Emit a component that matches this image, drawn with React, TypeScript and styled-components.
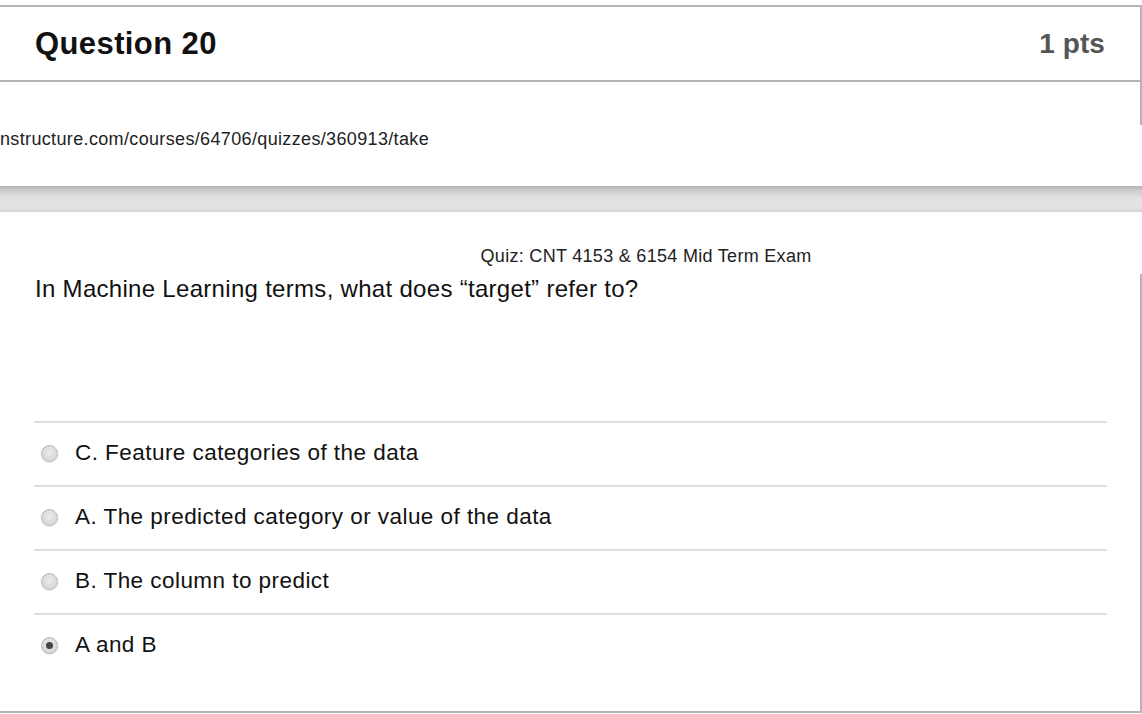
import React from 'react';
import styled, { createGlobalStyle } from 'styled-components';

const answers = [
  { id: 'c', label: 'C. Feature categories of the data', checked: false },
  { id: 'a', label: 'A. The predicted category or value of the data', checked: false },
  { id: 'b', label: 'B. The column to predict', checked: false },
  { id: 'ab', label: 'A and B', checked: true },
];

const App = () => {
  return (
    <Page>
      <GlobalStyle />
      <QuestionCard>
        <Header>
          <Title>Question 20</Title>
          <Points>1 pts</Points>
        </Header>
        <CardStub />
      </QuestionCard>
      <UrlLine>nstructure.com/courses/64706/quizzes/360913/take</UrlLine>
      <PageBreak />
      <QuizName>Quiz: CNT 4153 &amp; 6154 Mid Term Exam</QuizName>
      <Body>
        <QuestionText>In Machine Learning terms, what does “target” refer to?</QuestionText>
        <AnswerList>
          {answers.map((a) => (
            <Answer key={a.id}>
              <Radio checked={a.checked} />
              <AnswerLabel>{a.label}</AnswerLabel>
            </Answer>
          ))}
        </AnswerList>
      </Body>
    </Page>
  );
};

const GlobalStyle = createGlobalStyle`
  html, body {
    margin: 0;
    padding: 0;
    background: #fff;
  }
  body {
    font-family: 'Liberation Sans', Arial, sans-serif;
    color: #111;
  }
`;

const Page = styled.div`
  width: 1142px;
  height: 714px;
  overflow: hidden;
  padding-top: 5px;
  box-sizing: border-box;
`;

const QuestionCard = styled.section`
  width: 1142px;
  box-sizing: border-box;
  border-top: 2px solid #b4b4b4;
  border-right: 2px solid #b4b4b4;
`;

const Header = styled.div`
  display: flex;
  align-items: center;
  justify-content: space-between;
  height: 73px;
  padding: 0 35px;
  border-bottom: 2px solid #b4b4b4;
`;

const Title = styled.h2`
  margin: 0;
  font-size: 31px;
  font-weight: bold;
  letter-spacing: 0.4px;
  color: #111;
`;

const Points = styled.span`
  font-size: 28px;
  font-weight: bold;
  letter-spacing: 0.1px;
  color: #555;
`;

const CardStub = styled.div`
  height: 43px;
`;

const UrlLine = styled.div`
  height: 61px;
  padding-top: 4px;
  box-sizing: border-box;
  font-size: 18px;
  letter-spacing: 0.35px;
  color: #222;
  white-space: nowrap;
`;

const PageBreak = styled.div`
  height: 26px;
  background: linear-gradient(
    to bottom,
    #b3b3b3 0%,
    #cfcfcf 20%,
    #e2e2e2 45%,
    #e3e3e3 86%,
    #d2d2d2 100%
  );
`;

const QuizName = styled.div`
  height: 62px;
  padding: 34px 0 0 150px;
  box-sizing: border-box;
  text-align: center;
  font-size: 18px;
  letter-spacing: 0.3px;
  color: #222;
`;

const Body = styled.section`
  width: 1142px;
  height: 439px;
  box-sizing: border-box;
  border-right: 2px solid #b4b4b4;
  border-bottom: 2px solid #b4b4b4;
  padding: 1px 0 0 35px;
`;

const QuestionText = styled.p`
  margin: 0;
  height: 146px;
  font-size: 24px;
  letter-spacing: 0.3px;
  color: #111;
`;

const AnswerList = styled.ul`
  list-style: none;
  margin: 0 0 0 -1px;
  padding: 0;
  width: 1073px;
`;

const Answer = styled.li`
  display: flex;
  align-items: center;
  height: 64px;
  box-sizing: border-box;
  border-top: 2px solid #dedede;
  padding: 0 0 2px 7px;
`;

const Radio = styled.span<{ checked: boolean }>`
  position: relative;
  width: 17px;
  height: 17px;
  box-sizing: border-box;
  border-radius: 50%;
  border: 1px solid #b9b9b9;
  background: radial-gradient(circle at 50% 45%, #ececec 0%, #dadada 60%, #c9c9c9 100%);
  box-shadow: 0 1px 1px rgba(0, 0, 0, 0.1);
  margin-right: 17px;
  flex-shrink: 0;

  &::after {
    content: '';
    display: ${(p) => (p.checked ? 'block' : 'none')};
    position: absolute;
    left: 50%;
    top: 50%;
    width: 7px;
    height: 7px;
    margin: -3.5px 0 0 -3.5px;
    border-radius: 50%;
    background: #454545;
  }
`;

const AnswerLabel = styled.span`
  font-size: 22.5px;
  letter-spacing: 0.45px;
  color: #111;
`;

export default App;
